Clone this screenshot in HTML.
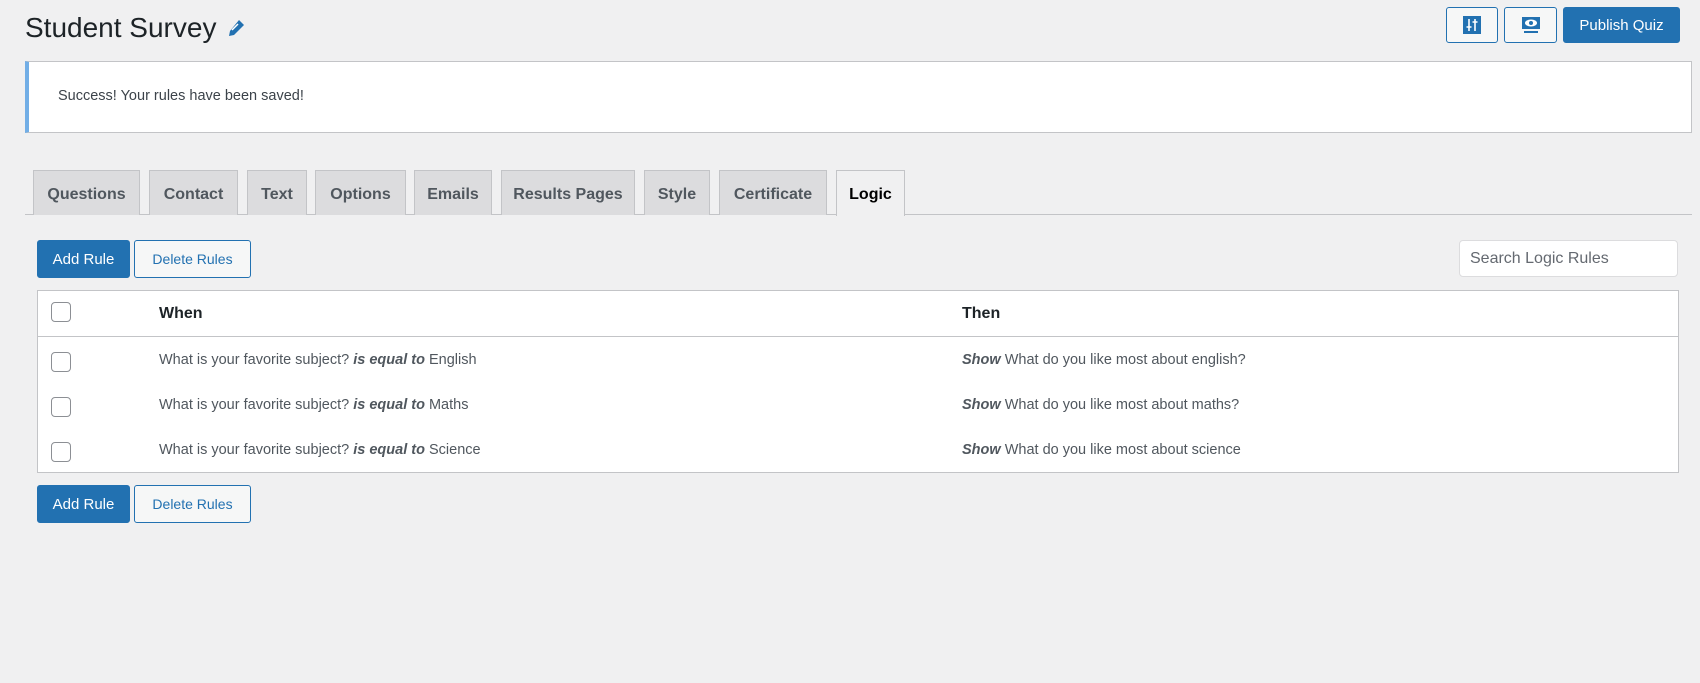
<!DOCTYPE html>
<html><head><style>
*{box-sizing:border-box;margin:0;padding:0}
body{width:1700px;height:683px;background:#f0f0f1;font-family:"Liberation Sans",sans-serif;color:#3c434a;position:relative;overflow:hidden}
.a{position:absolute}
h1{position:absolute;left:25px;top:12px;font-size:28px;font-weight:400;color:#1d2327}
.btn{position:absolute;border-radius:3px;font-size:14px;display:flex;align-items:center;justify-content:center}
.pri{background:#2271b1;color:#fff;border:1px solid #2271b1}
.sec{background:#f6f7f7;color:#2271b1;border:1px solid #2271b1}
.notice{left:25px;top:61px;width:1667px;height:72px;background:#fff;border:1px solid #c3c4c7;border-left:4px solid #72aee6}
.tab{position:absolute;top:170px;height:45px;background:#dcdcde;border:1px solid #c3c4c7;border-bottom:none;font-size:16px;font-weight:bold;color:#50575e;display:flex;align-items:center;justify-content:center;padding-top:3px}
.cb{position:absolute;left:51px;width:20px;height:20px;border:1px solid #8c8f94;border-radius:4px;background:#fff}
.t{position:absolute;font-size:14.5px;color:#50575e}
</style></head><body>
<h1>Student Survey</h1>
<svg class="a" style="left:226px;top:18px" width="20" height="20" viewBox="0 0 20 20"><path d="M13 2l5 5-10 10-5 1 1-5z" fill="#2271b1"/><path d="M6 12l6-6" stroke="#fff" stroke-width="1.5"/></svg>
<div class="btn sec" style="left:1446px;top:7px;width:52px;height:36px"><svg width="18" height="18" viewBox="0 0 18 18"><rect width="18" height="18" fill="#2271b1"/><path d="M6 3v12M12 3v12M3.5 11h5M9.5 6h5" stroke="#fff" stroke-width="1.6"/></svg></div>
<div class="btn sec" style="left:1504px;top:7px;width:53px;height:36px"><svg width="20" height="20" viewBox="0 0 20 20"><rect x="1" y="2" width="18" height="12" fill="#2271b1"/><ellipse cx="10" cy="8" rx="6" ry="3.5" fill="#fff"/><circle cx="10" cy="8" r="2" fill="#2271b1"/><rect x="3" y="16" width="14" height="2" fill="#2271b1"/></svg></div>
<div class="btn pri" style="left:1563px;top:7px;width:117px;height:36px;font-size:15px">Publish Quiz</div>
<div class="a notice"><div class="t" style="left:29px;top:26px;font-size:14.5px;color:#3c434a">Success! Your rules have been saved!</div></div>
<div class="a" style="left:25px;top:214px;width:1667px;height:1px;background:#c3c4c7"></div>
<div class="tab" style="left:33px;width:107px">Questions</div>
<div class="tab" style="left:149px;width:89px">Contact</div>
<div class="tab" style="left:247px;width:60px">Text</div>
<div class="tab" style="left:315px;width:91px">Options</div>
<div class="tab" style="left:414px;width:78px">Emails</div>
<div class="tab" style="left:501px;width:134px">Results Pages</div>
<div class="tab" style="left:644px;width:66px">Style</div>
<div class="tab" style="left:719px;width:108px">Certificate</div>
<div class="tab" style="left:836px;width:69px;height:46px;background:#f0f0f1;color:#000">Logic</div>
<div class="btn pri" style="left:37px;top:240px;width:93px;height:38px;font-size:15px">Add Rule</div>
<div class="btn sec" style="left:134px;top:240px;width:117px;height:38px">Delete Rules</div>
<div class="a" style="left:1459px;top:240px;width:219px;height:37px;background:#fff;border:1px solid #dcdcde;border-radius:4px;font-size:16px;color:#646970;padding:9px 10px">Search Logic Rules</div>
<div class="a" style="left:37px;top:290px;width:1642px;height:183px;background:#fff;border:1px solid #c3c4c7"></div>
<div class="a" style="left:37px;top:336px;width:1642px;height:1px;background:#c3c4c7"></div>
<div class="cb" style="top:302px"></div>
<div class="t" style="left:159px;top:305px;font-size:16px;font-weight:bold;color:#1d2327">When</div>
<div class="t" style="left:962px;top:305px;font-size:16px;font-weight:bold;color:#1d2327">Then</div>
<div class="cb" style="top:352px"></div><div class="t" style="left:159px;top:352px">What is your favorite subject? <b><i>is equal to</i></b> English</div><div class="t" style="left:962px;top:352px"><b><i>Show</i></b> What do you like most about english?</div>
<div class="cb" style="top:397px"></div><div class="t" style="left:159px;top:397px">What is your favorite subject? <b><i>is equal to</i></b> Maths</div><div class="t" style="left:962px;top:397px"><b><i>Show</i></b> What do you like most about maths?</div>
<div class="cb" style="top:442px"></div><div class="t" style="left:159px;top:442px">What is your favorite subject? <b><i>is equal to</i></b> Science</div><div class="t" style="left:962px;top:442px"><b><i>Show</i></b> What do you like most about science</div>
<div class="btn pri" style="left:37px;top:485px;width:93px;height:38px;font-size:15px">Add Rule</div>
<div class="btn sec" style="left:134px;top:485px;width:117px;height:38px">Delete Rules</div>
</body></html>
